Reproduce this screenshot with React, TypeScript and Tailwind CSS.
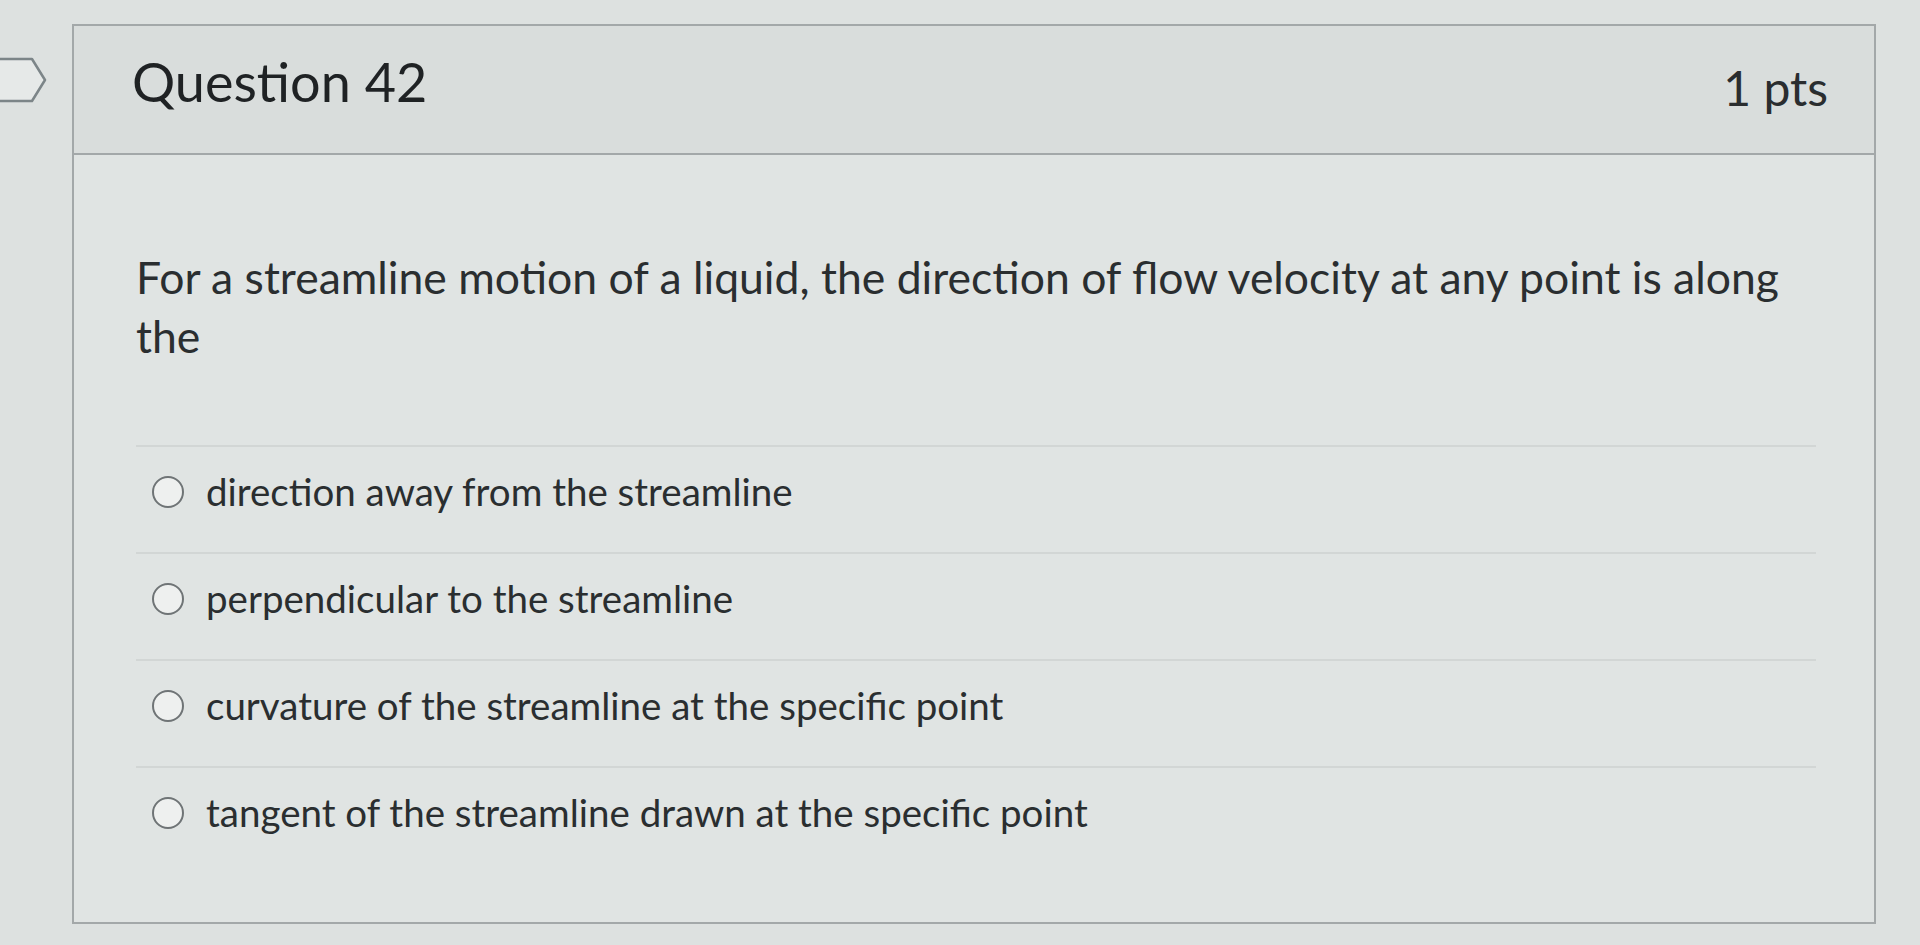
import React from 'react';

const answers = [
  'direction away from the streamline',
  'perpendicular to the streamline',
  'curvature of the streamline at the specific point',
  'tangent of the streamline drawn at the specific point',
];

const Radio: React.FC = () => (
  <span className="inline-block w-[32px] h-[32px] rounded-full border-[2.5px] border-[#6f7476] bg-[#eef0ef] shrink-0" />
);

export default function App() {
  return (
    <div
      className="w-[1920px] h-[945px] bg-[#dde1e0] flex pl-[72px] pr-[44px] pt-[24px] pb-[21px] relative overflow-hidden"
      style={{ fontFamily: 'Lato, "Open Sans", sans-serif' }}
    >
      {/* collapsed nav tab on the far left */}
      <svg className="absolute left-0 top-[57px]" width="48" height="46" viewBox="0 0 48 46">
        <path d="M-2 2 H32 L45 23 L32 44 H-2" fill="#e6e9e8" stroke="#7c8588" strokeWidth="2.5" strokeLinejoin="round" />
      </svg>

      <div className="flex-1 flex flex-col border-2 border-[#a3a8a9] bg-[#e0e4e3]">
        {/* header */}
        <div className="h-[129px] shrink-0 flex items-center justify-between pl-[58px] pr-[46px] bg-[#d9dddc] border-b-2 border-[#a3a8a9]">
          <h2 className="text-[54px] text-[#1f2224] pb-[16px]">Question 42</h2>
          <span className="text-[48px] text-[#2a2d2f] pb-[4px]">1 pts</span>
        </div>

        {/* body */}
        <div className="flex-1 pl-[62px] pr-[58px] pt-[92px]">
          <p className="text-[44.5px] leading-[59px] text-[#2a2e30] max-w-[1700px]">
            For a streamline motion of a liquid, the direction of flow velocity at any point is along the
          </p>

          <div className="mt-[80px] flex flex-col">
            {answers.map((a) => (
              <div key={a} className="h-[107px] border-t-2 border-[#d2d6d5] flex items-center gap-[22px] pl-[16px] pb-[16px]">
                <Radio />
                <span className="text-[38.5px] text-[#2a2e30]">{a}</span>
              </div>
            ))}
          </div>
        </div>
      </div>
    </div>
  );
}
